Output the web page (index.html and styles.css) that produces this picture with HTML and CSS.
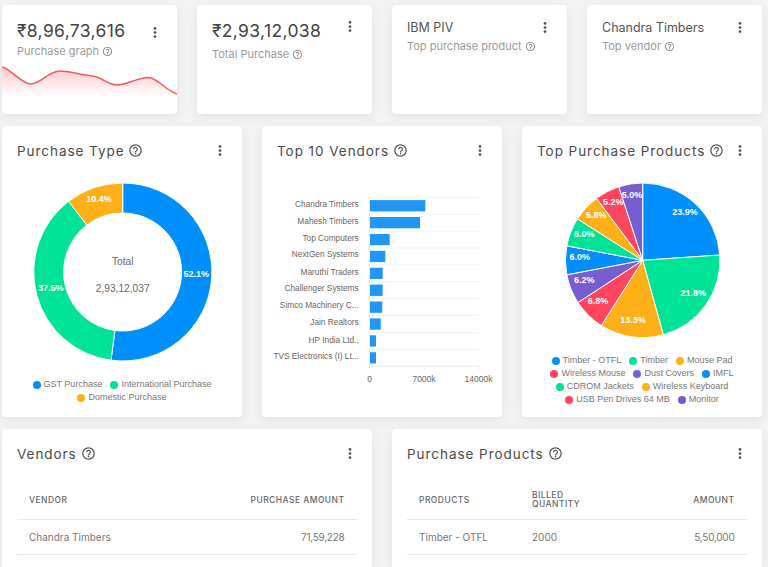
FILE: index.html
```html
<!DOCTYPE html>
<html lang="en">
<head>
<meta charset="utf-8">
<title>Purchase dashboard</title>
<link rel="stylesheet" href="styles.css">
</head>
<body>
<svg class="defs" width="0" height="0" aria-hidden="true">
  <symbol id="help" viewBox="0 0 24 24"><path d="M11 18h2v-2h-2v2zm1-16C6.48 2 2 6.48 2 12s4.48 10 10 10 10-4.48 10-10S17.52 2 12 2zm0 18c-4.41 0-8-3.59-8-8s3.59-8 8-8 8 3.59 8 8-3.59 8-8 8zm0-14c-2.21 0-4 1.79-4 4h2c0-1.1.9-2 2-2s2 .9 2 2c0 2-3 1.75-3 5h2c0-2.25 3-2.5 3-5 0-2.21-1.79-4-4-4z"/></symbol>
  <symbol id="more" viewBox="0 0 4 12"><circle cx="2" cy="1.6" r="1.5"/><circle cx="2" cy="6" r="1.5"/><circle cx="2" cy="10.4" r="1.5"/></symbol>
  <linearGradient id="spark" x1="0" y1="0" x2="0" y2="0.8"><stop offset="0" stop-color="#ff5a5f" stop-opacity=".32"/><stop offset="1" stop-color="#ff5a5f" stop-opacity="0"/></linearGradient>
</svg>
<main class="dash">
  <section class="row row-4">
    <article class="card stat stat-graph">
      <div class="stat-body">
        <div class="stat-text">
          <div class="stat-value">₹8,96,73,616</div>
          <div class="stat-sub">Purchase graph <svg class="help-sm"><use href="#help"/></svg></div>
        </div>
        <svg class="more"><use href="#more"/></svg>
      </div>
      <svg class="spark" viewBox="0 0 175 40" preserveAspectRatio="none">
        <path class="spark-fill" d="M0 2C10 5 20 19 29 19C39 19 46 6 58 6C68 6 78 10 91 11C100 12 106 20 115 20C125 20 136 12.500 146 12.500C156 13 163 25 175 29V40H0Z"/>
        <path class="spark-line" d="M0 2C10 5 20 19 29 19C39 19 46 6 58 6C68 6 78 10 91 11C100 12 106 20 115 20C125 20 136 12.500 146 12.500C156 13 163 25 175 29"/>
      </svg>
    </article>
    <article class="card stat stat-total">
      <div class="stat-body">
        <div class="stat-text">
          <div class="stat-value">₹2,93,12,038</div>
          <div class="stat-sub">Total Purchase <svg class="help-sm"><use href="#help"/></svg></div>
        </div>
        <svg class="more"><use href="#more"/></svg>
      </div>
    </article>
    <article class="card stat stat-name">
      <div class="stat-body">
        <div class="stat-text">
          <div class="stat-title">IBM PIV</div>
          <div class="stat-sub">Top purchase product <svg class="help-sm"><use href="#help"/></svg></div>
        </div>
        <svg class="more"><use href="#more"/></svg>
      </div>
    </article>
    <article class="card stat stat-name">
      <div class="stat-body">
        <div class="stat-text">
          <div class="stat-title">Chandra Timbers</div>
          <div class="stat-sub">Top vendor <svg class="help-sm"><use href="#help"/></svg></div>
        </div>
        <svg class="more"><use href="#more"/></svg>
      </div>
    </article>
  </section>

  <section class="row row-3">
    <article class="card chart-card">
      <header class="card-head">
        <h2>Purchase Type <svg class="help"><use href="#help"/></svg></h2>
        <svg class="more"><use href="#more"/></svg>
      </header>
      <svg class="chart chart-donut" viewBox="0 0 240 204">
        <g transform="translate(120.7 102)">
          <path class="s-blue slice" d="M0-89A89 89 0 1 1-11.700 88.200L-7.800 58.500A59 59 0 1 0 0-59Z"/>
          <path class="s-green slice" d="M-11.700 88.200A89 89 0 0 1-54.100-70.700L-35.900-46.900A59 59 0 0 0-7.800 58.500Z"/>
          <path class="s-orange slice" d="M-54.100-70.700A89 89 0 0 1 0-89L0-59A59 59 0 0 0-35.900-46.900Z"/>
        </g>
        <text class="dl" x="194.300" y="103.700">52.1%</text>
        <text class="dl" x="48.700" y="118.300">37.5%</text>
        <text class="dl" x="97" y="29">10.4%</text>
        <text class="center" x="120.700" y="91.700">Total</text>
        <text class="center" x="120.700" y="118">2,93,12,037</text>
      </svg>
      <ul class="legend legend-donut">
        <li><i class="dot d-blue"></i>GST Purchase</li>
        <li><i class="dot d-green"></i>International Purchase</li>
        <li><i class="dot d-orange"></i>Domestic Purchase</li>
      </ul>
    </article>

    <article class="card chart-card">
      <header class="card-head">
        <h2>Top 10 Vendors <svg class="help"><use href="#help"/></svg></h2>
        <svg class="more"><use href="#more"/></svg>
      </header>
      <svg class="chart chart-bar" viewBox="0 0 240 225">
        <g class="grid">
          <path d="M107.700 27.300H217.300M107.700 44.200H217.300M107.700 61.100H217.300M107.700 78H217.300M107.700 94.900H217.300M107.700 111.800H217.300M107.700 128.700H217.300M107.700 145.600H217.300M107.700 162.500H217.300M107.700 179.400H217.300"/>
          <path class="axis" d="M107.700 27.300V199M162 196.300V199M217.300 196.300V199M107.700 196.300H217.300"/>
        </g>
        <g class="bars">
          <rect x="108" y="30.100" width="55.300" height="11.300"/>
          <rect x="108" y="47" width="50" height="11.300"/>
          <rect x="108" y="63.900" width="19.700" height="11.300"/>
          <rect x="108" y="80.800" width="15.300" height="11.300"/>
          <rect x="108" y="97.700" width="12.700" height="11.300"/>
          <rect x="108" y="114.600" width="12.700" height="11.300"/>
          <rect x="108" y="131.500" width="12.300" height="11.300"/>
          <rect x="108" y="148.400" width="10.700" height="11.300"/>
          <rect x="108" y="165.300" width="6" height="11.300"/>
          <rect x="108" y="182.200" width="6" height="11.300"/>
        </g>
        <g class="y-labels">
          <text x="96.700" y="34">Chandra Timbers</text>
          <text x="96.700" y="50.500">Mahesh Timbers</text>
          <text x="96.700" y="67.500">Top Computers</text>
          <text x="96.700" y="84">NextGen Systems</text>
          <text x="96.700" y="101.500">Maruthi Traders</text>
          <text x="96.700" y="118.300">Challenger Systems</text>
          <text x="96.700" y="135">Simco Machinery C...</text>
          <text x="96.700" y="151.800">Jain Realtors</text>
          <text x="96.700" y="169.500">HP India Ltd.,</text>
          <text x="96.700" y="186">TVS Electronics (I) Lt...</text>
        </g>
        <g class="x-labels">
          <text x="107.500" y="209">0</text>
          <text x="162" y="209">7000k</text>
          <text x="216.500" y="209">14000k</text>
        </g>
      </svg>
    </article>

    <article class="card chart-card">
      <header class="card-head">
        <h2>Top Purchase Products <svg class="help"><use href="#help"/></svg></h2>
        <svg class="more"><use href="#more"/></svg>
      </header>
      <svg class="chart chart-pie" viewBox="0 0 240 180">
        <g transform="translate(120.7 90.300)">
          <path class="s-blue slice" d="M0 0V-77.300A77.300 77.300 0 0 1 77.100-5.300Z"/>
          <path class="s-green slice" d="M0 0L77.100-5.300A77.300 77.300 0 0 1 20.600 74.500Z"/>
          <path class="s-orange slice" d="M0 0L20.600 74.500A77.300 77.300 0 0 1-41.400 65.300Z"/>
          <path class="s-red slice" d="M0 0L-41.400 65.300A77.300 77.300 0 0 1-64.700 42.200Z"/>
          <path class="s-purple slice" d="M0 0L-64.700 42.200A77.300 77.300 0 0 1-75.900 14.500Z"/>
          <path class="s-blue slice" d="M0 0L-75.900 14.500A77.300 77.300 0 0 1-75.900-14.500Z"/>
          <path class="s-green slice" d="M0 0L-75.900-14.500A77.300 77.300 0 0 1-65.300-41.400Z"/>
          <path class="s-orange slice" d="M0 0L-65.300-41.400A77.300 77.300 0 0 1-46.200-62Z"/>
          <path class="s-red slice" d="M0 0L-46.200-62A77.300 77.300 0 0 1-23.900-73.500Z"/>
          <path class="s-purple slice" d="M0 0L-23.900-73.500A77.300 77.300 0 0 1 0-77.300Z"/>
        </g>
        <text class="dl" x="163" y="42">23.9%</text>
        <text class="dl" x="171.300" y="123.300">21.8%</text>
        <text class="dl" x="111" y="149.700">13.3%</text>
        <text class="dl" x="76" y="131">6.8%</text>
        <text class="dl" x="62.300" y="110">6.2%</text>
        <text class="dl" x="57.700" y="87">6.0%</text>
        <text class="dl" x="62.300" y="64.300">6.0%</text>
        <text class="dl" x="74.300" y="44.700">5.8%</text>
        <text class="dl" x="91.300" y="31.700">5.2%</text>
        <text class="dl" x="110" y="25">5.0%</text>
      </svg>
      <ul class="legend legend-pie">
        <li><i class="dot d-blue"></i>Timber - OTFL</li>
        <li><i class="dot d-green"></i>Timber</li>
        <li><i class="dot d-orange"></i>Mouse Pad</li>
        <li><i class="dot d-red"></i>Wireless Mouse</li>
        <li><i class="dot d-purple"></i>Dust Covers</li>
        <li><i class="dot d-blue"></i>IMFL</li>
        <li><i class="dot d-green"></i>CDROM Jackets</li>
        <li><i class="dot d-orange"></i>Wireless Keyboard</li>
        <li><i class="dot d-red"></i>USB Pen Drives 64 MB</li>
        <li><i class="dot d-purple"></i>Monitor</li>
      </ul>
    </article>
  </section>

  <section class="row row-2">
    <article class="card table-card">
      <header class="card-head">
        <h2>Vendors <svg class="help"><use href="#help"/></svg></h2>
        <svg class="more"><use href="#more"/></svg>
      </header>
      <table>
        <thead><tr><th>Vendor</th><th class="num">Purchase Amount</th></tr></thead>
        <tbody><tr><td>Chandra Timbers</td><td class="num">71,59,228</td></tr></tbody>
      </table>
    </article>
    <article class="card table-card">
      <header class="card-head">
        <h2>Purchase Products <svg class="help"><use href="#help"/></svg></h2>
        <svg class="more"><use href="#more"/></svg>
      </header>
      <table class="products">
        <thead><tr><th>Products</th><th>Billed<br>Quantity</th><th class="num">Amount</th></tr></thead>
        <tbody><tr><td>Timber - OTFL</td><td>2000</td><td class="num">5,50,000</td></tr></tbody>
      </table>
    </article>
  </section>
</main>
</body>
</html>
```
FILE: styles.css
```css
* { box-sizing: border-box; }
html, body { margin: 0; height: 567px; overflow: hidden; background: #f3f3f3; }
body { font-family: Inter, "Open Sans", sans-serif; color: #4a4a4a; }
.defs { position: absolute; }
.dash { width: 760px; margin-left: 2px; padding-top: 5px; display: flex; flex-direction: column; gap: 12px; }
.row { display: grid; column-gap: 20px; }
.row-4 { grid-template-columns: repeat(4, 175px); height: 109px; }
.row-3 { grid-template-columns: repeat(3, 240px); height: 291px; }
.row-2 { grid-template-columns: repeat(2, 370px); height: 138px; }
.card { background: #fff; border-radius: 4px; box-shadow: 0 3px 12px rgba(0, 0, 0, .07); overflow: hidden; }
.table-card { border-radius: 4px 4px 0 0; }

.stat-body { display: flex; justify-content: space-between; align-items: flex-start; padding: 0 20px 0 15px; }
.stat-value { font-size: 17.5px; line-height: 22px; letter-spacing: .35px; color: #444; }
.stat-title { font-size: 12.5px; line-height: 16px; color: #555; }
.stat-sub { font-size: 11px; line-height: 14px; color: #9a9a9a; display: flex; align-items: center; gap: 3px; }
.stat-graph .stat-body { padding-top: 15px; }
.stat-graph .stat-sub { margin-top: 2px; }
.stat-graph .more { margin-top: 7px; }
.stat-total .stat-body { padding-top: 15px; }
.stat-total .stat-sub { margin-top: 5px; }
.stat-total .more { margin-top: 1px; }
.stat-name .stat-body { padding-top: 15px; }
.stat-name .stat-sub { margin-top: 3px; }
.stat-name .more { margin-top: 2px; }
.more { width: 4px; height: 11px; fill: #555; flex: none; }
.help-sm { width: 11px; height: 11px; fill: #8a8a8a; }
.help { width: 15px; height: 15px; fill: #555; flex: none; }
.spark { display: block; width: 175px; height: 40px; margin-top: 7px; }
.spark-fill { fill: url(#spark); }
.spark-line { fill: none; stroke: #f9575b; stroke-width: 1.5; }

.card-head { display: flex; justify-content: space-between; align-items: center; height: 44px; padding: 5px 20px 0 15px; }
.card-head h2 { margin: 0; font-size: 13.5px; font-weight: 400; letter-spacing: .95px; color: #4a4a4a; display: flex; align-items: center; gap: 4px; white-space: nowrap; }
.chart { display: block; width: 240px; }
.chart-donut { height: 204px; }
.chart-bar { height: 225px; }
.chart-pie { height: 180px; }
.slice { stroke: #fff; stroke-width: 1; }
.s-blue { fill: #008ffb; }
.s-green { fill: #00e396; }
.s-orange { fill: #feb019; }
.s-red { fill: #ff4560; }
.s-purple { fill: #775dd0; }
.chart text { font-family: "Liberation Sans", Arial, sans-serif; }
.dl { font-size: 9px; font-weight: 700; fill: #fff; text-anchor: middle; dominant-baseline: central; }
.center { font-size: 10.2px; fill: #666; text-anchor: middle; dominant-baseline: central; }
.grid path { fill: none; stroke: #f1f1f1; stroke-width: 1; }
.grid .axis { stroke: #e6e6e6; }
.bars rect { fill: #2196f3; }
.y-labels text { font-size: 8.3px; fill: #666; text-anchor: end; dominant-baseline: central; }
.x-labels text { font-size: 8.5px; fill: #666; text-anchor: middle; dominant-baseline: central; }

.legend { list-style: none; margin: 0; padding: 0 10px; display: flex; flex-wrap: wrap; justify-content: center; column-gap: 8px; font-family: "Liberation Sans", Arial, sans-serif; font-size: 9px; line-height: 13px; color: #777; }
.legend li { display: flex; align-items: center; gap: 3px; white-space: nowrap; }
.legend-donut { margin-top: 4px; }
.legend-pie { margin-top: 4px; }
.dot { width: 8px; height: 8px; border-radius: 50%; flex: none; }
.d-blue { background: #008ffb; }
.d-green { background: #00e396; }
.d-orange { background: #feb019; }
.d-red { background: #ff4560; }
.d-purple { background: #775dd0; }

table { width: 340px; margin: 6px 0 0 15px; border-collapse: collapse; table-layout: fixed; }
th, td { padding: 0 12.500px 0 12px; text-align: left; font-weight: 400; border-bottom: 1px solid #e6e6e6; }
th { height: 40px; padding-top: 3px; font-size: 8.5px; line-height: 9px; letter-spacing: .45px; text-transform: uppercase; color: #666; font-weight: 500; }
td { height: 35px; font-size: 10px; color: #777; }
td.num { letter-spacing: -.25px; }
.num { text-align: right; }
.products th:nth-child(1) { width: 113px; }
.products th:nth-child(2) { width: 100px; }
```
